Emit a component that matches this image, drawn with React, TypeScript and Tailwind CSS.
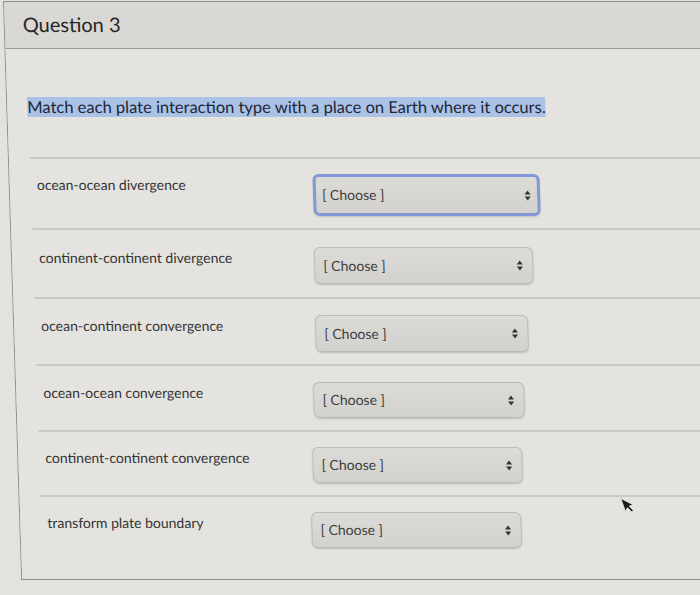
import React from "react";

type Row = {
  label: string;
  rowCls: string;
  labelCls: string;
  selCls: string;
  focused?: boolean;
};

const rows: Row[] = [
  {
    label: "ocean-ocean divergence",
    rowCls: "h-[71px]",
    labelCls: "w-[282px] mt-[15px]",
    selCls: "w-[227px] h-[42px] mt-[15px]",
    focused: true,
  },
  {
    label: "continent-continent divergence",
    rowCls: "h-[69px]",
    labelCls: "w-[281px] mt-[17px]",
    selCls: "w-[219px] h-[37px] mt-[17px]",
  },
  {
    label: "ocean-continent convergence",
    rowCls: "h-[67px]",
    labelCls: "w-[280px] mt-[16px]",
    selCls: "w-[213px] h-[37px] mt-[16px]",
  },
  {
    label: "ocean-ocean convergence",
    rowCls: "h-[66px]",
    labelCls: "w-[276px] mt-[16px]",
    selCls: "w-[211px] h-[36px] mt-[16px]",
  },
  {
    label: "continent-continent convergence",
    rowCls: "h-[65px]",
    labelCls: "w-[273px] mt-[15px]",
    selCls: "w-[210px] h-[36px] mt-[15px]",
  },
  {
    label: "transform plate boundary",
    rowCls: "h-[84px]",
    labelCls: "w-[270px] mt-[15px]",
    selCls: "w-[210px] h-[36px] mt-[15px]",
  },
];

function Arrows() {
  return (
    <svg width="7" height="11" viewBox="0 0 7 11" className="shrink-0">
      <path d="M3.5 0.5 L6.5 4.5 L0.5 4.5 Z" fill="#333" />
      <path d="M3.5 10.5 L6.5 6.5 L0.5 6.5 Z" fill="#333" />
    </svg>
  );
}

function Select({ cls, focused }: { cls: string; focused?: boolean }) {
  return (
    <div
      className={
        cls +
        " flex items-center justify-between rounded-[6px] bg-gradient-to-b from-[#dcdbd8] to-[#d2d1ce] " +
        (focused
          ? "border-[3px] border-[#8198d8] pl-[6px] pr-[6px] shadow-[0_1px_2px_rgba(0,0,0,0.15)]"
          : "border border-[#bcbbb8] pl-[8px] pr-[9px] shadow-[0_1px_2px_rgba(0,0,0,0.18)]")
      }
    >
      <span className="text-[14px] leading-none text-[#3d3d3d]">[ Choose ]</span>
      <Arrows />
    </div>
  );
}

export default function App() {
  return (
    <div
      className="relative h-[595px] w-[700px] overflow-hidden bg-[#e3e2de] text-[#333]"
      style={{ fontFamily: "Lato, 'Open Sans', 'Liberation Sans', sans-serif" }}
    >
      <div className="ml-[3px] mt-[1px] w-[740px] origin-top-left [transform:skewX(1.8deg)] border-l border-t border-b border-[#8f8e8b]">
        <div className="flex h-[47px] items-center border-b border-[#9c9b98] bg-[#d9d8d4] pb-[3px] pl-[18px]">
          <span className="text-[20px] text-[#262626]">Question 3</span>
        </div>
        <div className="bg-[#e4e3df]">
          <div className="pl-[20px] pt-[48px] text-[16.5px] leading-[20px]">
            <span className="bg-[#a9c2e6] text-[#1f2636]">
              Match each plate interaction type with a place on Earth where it occurs.
            </span>
          </div>
          <div className="ml-[21px] mt-[40px]">
            {rows.map((r, i) => (
              <div
                key={i}
                className={r.rowCls + " flex items-start border-t-2 border-[#cac9c6]"}
              >
                <div
                  className={
                    r.labelCls + " shrink-0 pl-[6px] text-[14px] leading-[22px] text-[#333]"
                  }
                >
                  {r.label}
                </div>
                <Select cls={r.selCls} focused={r.focused} />
              </div>
            ))}
          </div>
        </div>
      </div>
      <svg
        className="absolute left-[618px] top-[497px]"
        width="16"
        height="20"
        viewBox="0 0 16 20"
      >
        <g transform="rotate(-20 4 2)">
          <path
            d="M3 1 L3 15 L6.2 12 L8.7 17.5 L10.8 16.5 L8.3 11.2 L12.5 11.2 Z"
            fill="#1a1a1a"
            stroke="#e4e3df"
            strokeWidth="0.8"
          />
        </g>
      </svg>
    </div>
  );
}
